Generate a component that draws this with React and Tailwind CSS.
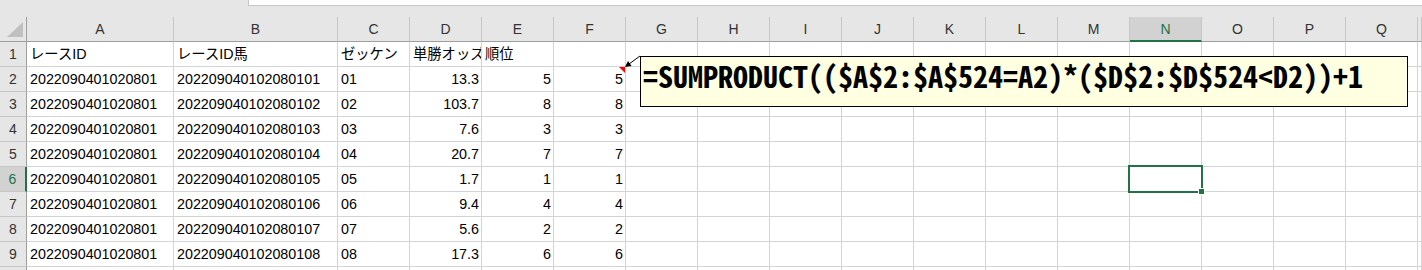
import React from "react";

const letters = ["A","B","C","D","E","F","G","H","I","J","K","L","M","N","O","P","Q",""];

const rows = [
  ["レースID", "レースID馬", "ゼッケン", "単勝オッズ", "順位", ""],
  ["2022090401020801", "202209040102080101", "01", "13.3", "5", "5"],
  ["2022090401020801", "202209040102080102", "02", "103.7", "8", "8"],
  ["2022090401020801", "202209040102080103", "03", "7.6", "3", "3"],
  ["2022090401020801", "202209040102080104", "04", "20.7", "7", "7"],
  ["2022090401020801", "202209040102080105", "05", "1.7", "1", "1"],
  ["2022090401020801", "202209040102080106", "06", "9.4", "4", "4"],
  ["2022090401020801", "202209040102080107", "07", "5.6", "2", "2"],
  ["2022090401020801", "202209040102080108", "08", "17.3", "6", "6"],
  ["", "", "", "", "", ""],
];

export default function App() {
  return (
    <div className="relative w-[1422px] h-[270px] overflow-hidden bg-white font-['Liberation_Sans','Noto_Sans_CJK_JP',sans-serif] text-[14.3px] text-black">
      {/* top strip */}
      <div className="flex h-[17px] bg-[#e6e6e6]">
        <div className="ml-[248px] flex-1 h-[6px] bg-white border-l border-b border-[#c6c6c6]" />
      </div>

      {/* grid */}
      <div className="grid grid-cols-[27px_147px_164px_repeat(15,72px)_1fr]">
        {/* header row */}
        <div className="relative h-[25px] bg-[#e6e6e6] border-r border-b border-[#9e9e9e]">
          <svg className="absolute left-[7px] top-[5px]" width="17" height="16" viewBox="0 0 17 16">
            <polygon points="0,15 16,15 16,0" fill="#c0c0c0" />
          </svg>
        </div>
        {letters.map((l, i) =>
          l === "N" ? (
            <div key={i} className="h-[25px] bg-[#d2d2d2] border-r border-[#c6c6c6] border-b-2 border-b-[#217346] text-[#217346] text-center leading-[24px] text-[14px]">
              {l}
            </div>
          ) : (
            <div key={i} className="h-[25px] bg-[#e6e6e6] border-r border-[#c6c6c6] border-b border-b-[#9e9e9e] text-[#333333] text-center leading-[24px] text-[14px]">
              {l}
            </div>
          )
        )}

        {rows.map((r, ri) => {
          const rowNum = ri + 1;
          const sel = rowNum === 6;
          return (
            <React.Fragment key={ri}>
              {sel ? (
                <div className="h-[25px] bg-[#d2d2d2] border-r-2 border-r-[#217346] border-b border-b-[#c6c6c6] text-[#217346] text-center leading-[24px] text-[14px]">
                  {rowNum}
                </div>
              ) : (
                <div className="h-[25px] bg-[#e6e6e6] border-r border-r-[#9e9e9e] border-b border-b-[#c6c6c6] text-[#333333] text-center leading-[24px] text-[14px]">
                  {rowNum}
                </div>
              )}
              {letters.map((l, ci) => {
                const v = ci < 6 ? r[ci] : "";
                const right = rowNum > 1 && ci >= 3 && ci <= 5;
                return (
                  <div
                    key={ci}
                    className={
                      "relative h-[25px] border-r border-b border-[#d4d4d4] leading-[24px] whitespace-nowrap overflow-hidden " +
                      (right ? "text-right pr-[2px]" : "pl-[3px]")
                    }
                  >
                    {v}
                    {rowNum === 2 && l === "F" && (
                      <svg className="absolute right-0 top-0" width="6" height="6" viewBox="0 0 6 6">
                        <polygon points="0,0 6,0 6,6" fill="#ff0000" />
                      </svg>
                    )}
                  </div>
                );
              })}
            </React.Fragment>
          );
        })}
      </div>

      {/* selected cell N6 */}
      <div className="absolute left-[1128px] top-[165px] w-[75px] h-[28px] border-2 border-[#217346]">
        <div className="absolute right-[-4px] bottom-[-4px] w-[7px] h-[7px] bg-[#217346] border border-white" />
      </div>

      {/* comment arrow */}
      <svg className="absolute left-[615px] top-[50px]" width="30" height="25" viewBox="0 0 30 25">
        <line x1="25" y1="6" x2="12" y2="15.5" stroke="#000" strokeWidth="1" />
        <polygon points="10,17 16.6,15.9 13,11" fill="#000" />
      </svg>

      {/* comment box */}
      <div className="absolute left-[640px] top-[56px] w-[768px] h-[51px] bg-[#ffffe1] border border-black">
        <div className="pl-[2px] pt-px font-['Noto_Sans_Mono_CJK_JP','DejaVu_Sans_Mono',monospace] font-bold text-[30px] leading-[34px] text-black whitespace-nowrap">
          =SUMPRODUCT(($A$2:$A$524=A2)*($D$2:$D$524&lt;D2))+1
        </div>
      </div>
    </div>
  );
}
